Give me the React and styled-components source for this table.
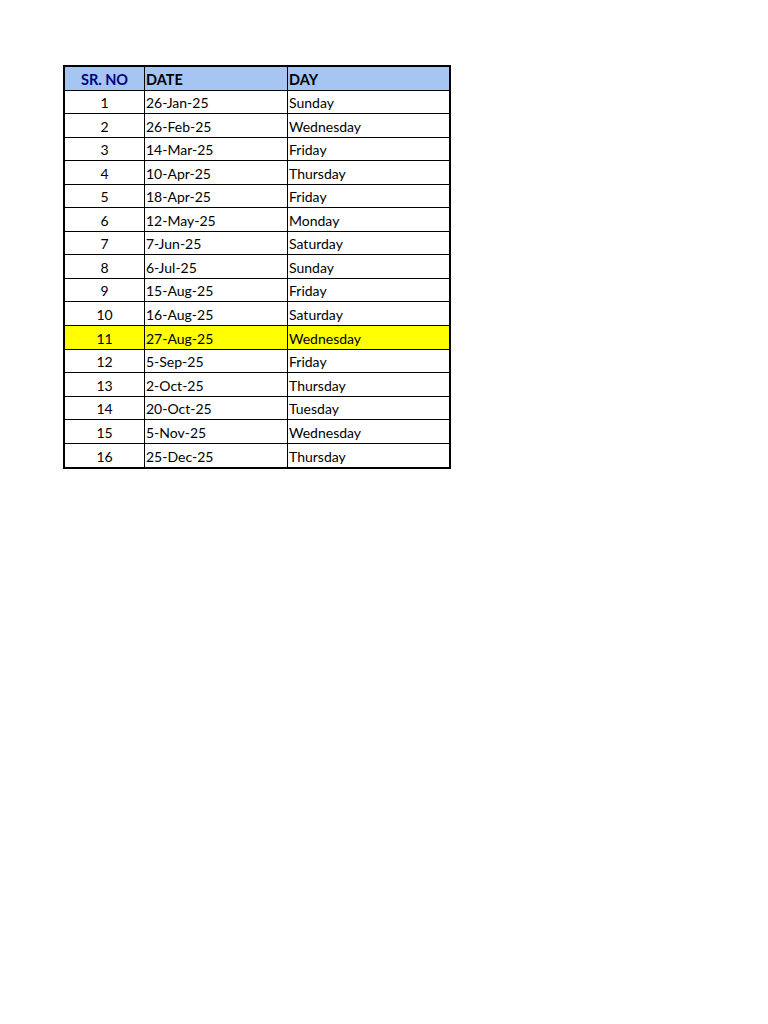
import styled, { createGlobalStyle } from "styled-components";

const GlobalStyle = createGlobalStyle`
  body {
    margin: 0;
    background: #fff;
    font-family: Lato, "Open Sans", "Liberation Sans", sans-serif;
  }
`;

const Page = styled.div`
  padding: 65px 0 0 63px;
`;

const Sheet = styled.div`
  display: inline-grid;
  grid-template-columns: 80px 143px 161px;
  grid-auto-rows: 23.55px;
  border: 2px solid #000;
`;

const Cell = styled.div`
  display: flex;
  align-items: flex-end;
  justify-content: ${({ $center }) => ($center ? "center" : "flex-start")};
  padding: 0 1px 2px;
  box-sizing: border-box;
  font-size: 14px;
  color: #000;
  border-bottom: 1px solid #000;
  border-right: ${({ $last }) => ($last ? "none" : "1px solid #000")};
  background: ${({ $bg }) => $bg || "transparent"};
  white-space: nowrap;
  &:nth-last-child(-n + 3) {
    border-bottom: none;
  }
`;

const HeadCell = styled(Cell)`
  background: #a7c5f2;
  font-weight: 700;
  font-size: 14.5px;
  color: ${({ $center }) => ($center ? "#00007f" : "#000")};
`;

const rows = [
  [1, "26-Jan-25", "Sunday"],
  [2, "26-Feb-25", "Wednesday"],
  [3, "14-Mar-25", "Friday"],
  [4, "10-Apr-25", "Thursday"],
  [5, "18-Apr-25", "Friday"],
  [6, "12-May-25", "Monday"],
  [7, "7-Jun-25", "Saturday"],
  [8, "6-Jul-25", "Sunday"],
  [9, "15-Aug-25", "Friday"],
  [10, "16-Aug-25", "Saturday"],
  [11, "27-Aug-25", "Wednesday", true],
  [12, "5-Sep-25", "Friday"],
  [13, "2-Oct-25", "Thursday"],
  [14, "20-Oct-25", "Tuesday"],
  [15, "5-Nov-25", "Wednesday"],
  [16, "25-Dec-25", "Thursday"],
];

export default function App() {
  return (
    <Page>
      <GlobalStyle />
      <Sheet>
        <HeadCell $center>SR. NO</HeadCell>
        <HeadCell>DATE</HeadCell>
        <HeadCell $last>DAY</HeadCell>
        {rows.map(([no, date, day, hl]) => {
          const bg = hl ? "#ffff00" : undefined;
          return [
            <Cell key={no + "n"} $center $bg={bg}>{no}</Cell>,
            <Cell key={no + "d"} $bg={bg}>{date}</Cell>,
            <Cell key={no + "w"} $last $bg={bg}>{day}</Cell>,
          ];
        })}
      </Sheet>
    </Page>
  );
}
